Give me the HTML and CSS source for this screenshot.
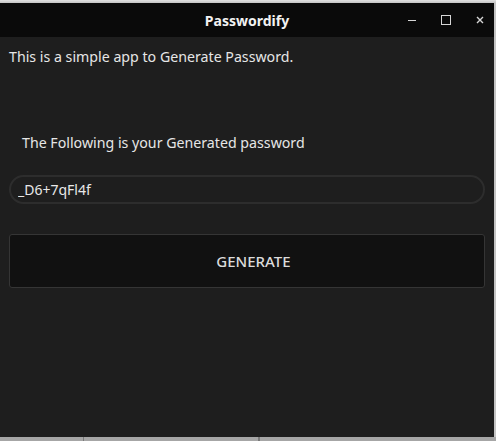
FILE: index.html
```html
<!DOCTYPE html>
<html lang="en">
<head>
    <meta charset="UTF-8">
    <meta name="viewport" content="width=device-width, initial-scale=1.0">
    <title>Passwordify</title>
    <link rel="stylesheet" href="styles.css">
</head>
<body>
    <div class="window">
        <div class="titlebar">
            <span class="title">Passwordify</span>
            <div class="controls">
                <span class="ctl ctl-min"></span>
                <span class="ctl ctl-max"></span>
                <span class="ctl ctl-close">
                    <svg width="8" height="8" viewBox="0 0 8 8">
                        <path d="M1 1 L7 7 M7 1 L1 7" stroke="#d6d6d6" stroke-width="1.4"/>
                    </svg>
                </span>
            </div>
        </div>

        <div class="app">
            <p class="intro">This is a simple app to Generate Password.</p>
            <p class="label">The Following is your Generated password</p>
            <input class="password" type="text" id="password" value="_D6+7qFl4f" readonly>
            <a class="btn" id="generate">GENERATE</a>
        </div>
    </div>
    <div class="taskbar">
        <span class="seg seg-a"></span>
        <span class="seg seg-b"></span>
        <span class="seg"></span>
    </div>

    <script>
        const chars = 'ABCDEFGHIJKLMNOPQRSTUVWXYZabcdefghijklmnopqrstuvwxyz0123456789_+-!@#$%';

        function make_password(length) {
            let out = '';
            for (let i = 0; i < length; i++) {
                out += chars[Math.floor(Math.random() * chars.length)];
            }
            return out;
        }

        document.getElementById('generate').addEventListener('click', function() {
            document.getElementById('password').value = make_password(10);
        });
    </script>
</body>
</html>
```

FILE: styles.css
```css
* {
    box-sizing: border-box;
}

body {
    margin: 0;
    height: 441px;
    background: linear-gradient(#e2e2e2, #c4c4c4 3px);
    font-family: "Noto Sans", "Open Sans", sans-serif;
    overflow: hidden;
    padding-top: 3px;
}

.window {
    width: 494px;
    height: 434px;
    background-color: #1e1e1e;
    display: flex;
    flex-direction: column;
}

.titlebar {
    height: 34px;
    background-color: #0a0a0a;
    display: flex;
    align-items: center;
    justify-content: center;
    position: relative;
}

.titlebar .title {
    color: #f2f2f2;
    font-weight: bold;
    font-size: 14px;
}

.controls {
    position: absolute;
    right: -3px;
    top: 0;
    height: 34px;
    display: flex;
    align-items: center;
}

.ctl {
    width: 34px;
    height: 34px;
    display: flex;
    align-items: center;
    justify-content: center;
}

.ctl-min::before {
    content: '';
    width: 8px;
    height: 1px;
    background: #d6d6d6;
}

.ctl-max::before {
    content: '';
    width: 8px;
    height: 8px;
    border: 1px solid #d6d6d6;
}

.app {
    padding: 0 9px;
    display: flex;
    flex-direction: column;
}

.app p {
    margin: 0;
    color: #e6e6e6;
    font-size: 14.2px;
}

.app .intro {
    margin-top: 10px;
}

.app .label {
    margin-top: 67px;
    padding-left: 13px;
}

.password {
    margin-top: 23px;
    height: 29px;
    border: 2px solid #2d2d2d;
    border-radius: 15px;
    background: #1e1e1e;
    color: #e8e8e8;
    font-family: inherit;
    font-size: 14px;
    padding: 0 7px;
    outline: none;
}

.btn {
    margin-top: 30px;
    height: 54px;
    background: #111111;
    border: 1px solid #353535;
    border-radius: 3px;
    color: #dcdcdc;
    font-size: 15px;
    font-weight: 500;
    padding-left: 13px;
    display: flex;
    align-items: center;
    justify-content: center;
    cursor: pointer;
}

.taskbar {
    height: 4px;
    background: #a6a6a6;
    display: flex;
}

.seg {
    border-right: 1px solid #7a7a7a;
}

.seg-a {
    width: 84px;
}

.seg-b {
    width: 175px;
}
```
